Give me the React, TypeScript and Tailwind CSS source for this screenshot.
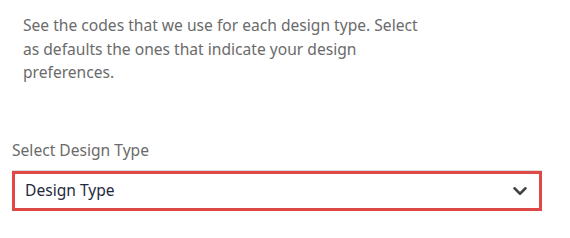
import { ChevronDown } from "lucide-react";

export default function App() {
  return (
    <div className="w-[570px] h-[238px] bg-white font-['Noto_Sans',sans-serif]">
      <div className="pt-[14px] pl-[23px]">
        <p className="w-[405px] text-[15.6px] leading-[23.5px] text-[#6b6b6b]">
          See the codes that we use for each design type. Select as defaults the ones that indicate your design
          preferences.
        </p>
      </div>
      <div className="mt-[54px] px-3">
        <label className="block text-[15.6px] leading-[22px] text-[#6b6b6b]">Select Design Type</label>
        <div className="mt-[10px] w-[530px] h-10 border-[3px] border-[#e04848] shadow-[0_-1px_0_#dcdcdc] flex items-center justify-between pl-[10px] pr-[8px]">
          <span className="text-[15.6px] text-[#1f2940]">Design Type</span>
          <ChevronDown size={22} strokeWidth={2.7} className="text-[#444]" />
        </div>
      </div>
    </div>
  );
}
